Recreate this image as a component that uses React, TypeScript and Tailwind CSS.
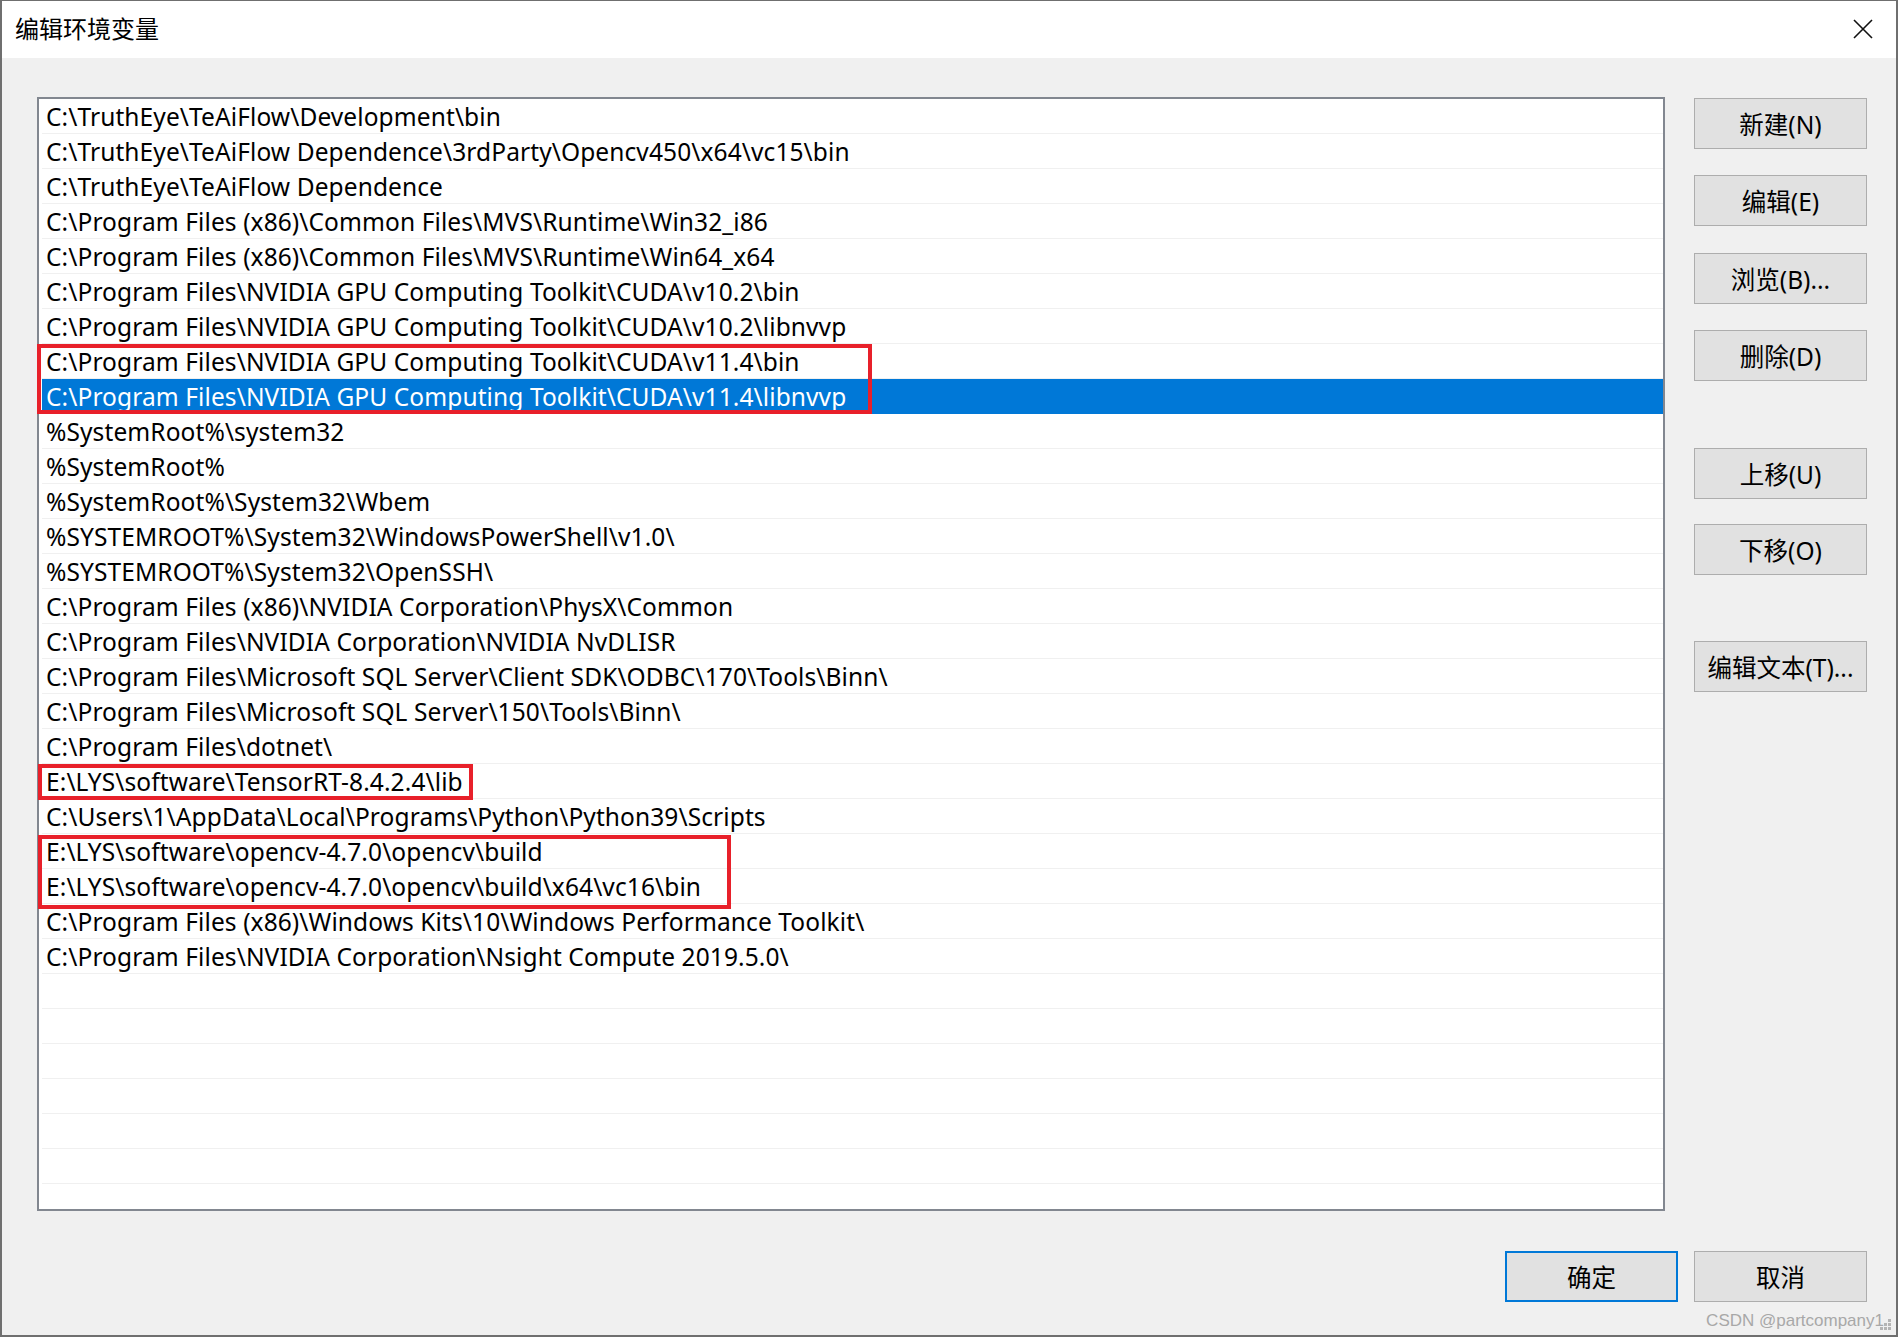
import React from "react";

const FONT = '"Noto Sans", "Noto Sans CJK SC", sans-serif';

const PATHS = [
  "C:\\TruthEye\\TeAiFlow\\Development\\bin",
  "C:\\TruthEye\\TeAiFlow Dependence\\3rdParty\\Opencv450\\x64\\vc15\\bin",
  "C:\\TruthEye\\TeAiFlow Dependence",
  "C:\\Program Files (x86)\\Common Files\\MVS\\Runtime\\Win32_i86",
  "C:\\Program Files (x86)\\Common Files\\MVS\\Runtime\\Win64_x64",
  "C:\\Program Files\\NVIDIA GPU Computing Toolkit\\CUDA\\v10.2\\bin",
  "C:\\Program Files\\NVIDIA GPU Computing Toolkit\\CUDA\\v10.2\\libnvvp",
  "C:\\Program Files\\NVIDIA GPU Computing Toolkit\\CUDA\\v11.4\\bin",
  "C:\\Program Files\\NVIDIA GPU Computing Toolkit\\CUDA\\v11.4\\libnvvp",
  "%SystemRoot%\\system32",
  "%SystemRoot%",
  "%SystemRoot%\\System32\\Wbem",
  "%SYSTEMROOT%\\System32\\WindowsPowerShell\\v1.0\\",
  "%SYSTEMROOT%\\System32\\OpenSSH\\",
  "C:\\Program Files (x86)\\NVIDIA Corporation\\PhysX\\Common",
  "C:\\Program Files\\NVIDIA Corporation\\NVIDIA NvDLISR",
  "C:\\Program Files\\Microsoft SQL Server\\Client SDK\\ODBC\\170\\Tools\\Binn\\",
  "C:\\Program Files\\Microsoft SQL Server\\150\\Tools\\Binn\\",
  "C:\\Program Files\\dotnet\\",
  "E:\\LYS\\software\\TensorRT-8.4.2.4\\lib",
  "C:\\Users\\1\\AppData\\Local\\Programs\\Python\\Python39\\Scripts",
  "E:\\LYS\\software\\opencv-4.7.0\\opencv\\build",
  "E:\\LYS\\software\\opencv-4.7.0\\opencv\\build\\x64\\vc16\\bin",
  "C:\\Program Files (x86)\\Windows Kits\\10\\Windows Performance Toolkit\\",
  "C:\\Program Files\\NVIDIA Corporation\\Nsight Compute 2019.5.0\\",
];

const SELECTED = 8;
const TOTAL_ROWS = 32;

function DialogButton({
  label,
  className = "",
  primary = false,
}: {
  label: string;
  className?: string;
  primary?: boolean;
}) {
  return (
    <button
      type="button"
      className={`flex h-[51px] w-[173px] items-center justify-center bg-[#e1e1e1] pt-[4px] text-[24.5px] leading-none text-black ${
        primary ? "border-2 border-[#0078d7]" : "border border-[#adadad]"
      } ${className}`}
    >
      {label}
    </button>
  );
}

function SizeGrip() {
  const dots = [
    [8, 0],
    [4, 4],
    [8, 4],
    [0, 8],
    [4, 8],
    [8, 8],
  ];
  return (
    <svg width="12" height="12" viewBox="0 0 12 12" className="mb-[4px] ml-[-4px]">
      {dots.map(([x, y]) => (
        <rect key={`${x}-${y}`} x={x} y={y} width="3" height="3" fill="#b4b4b4" />
      ))}
    </svg>
  );
}

export default function App() {
  const rows = Array.from({ length: TOTAL_ROWS }, (_, i) => PATHS[i] ?? "");

  return (
    <div
      className="flex h-[1337px] w-[1898px] flex-col border-x-2 border-t border-b-2 border-[#6f6f6f] bg-[#f0f0f0]"
      style={{ fontFamily: FONT }}
    >
      {/* title bar */}
      <div className="flex h-[57px] shrink-0 items-center justify-between bg-white pl-[13px] pr-[23px]">
        <span className="pb-[2px] text-[24px] text-black">编辑环境变量</span>
        <svg width="20" height="20" viewBox="0 0 20 20" className="mt-[-1px]">
          <path d="M1 1 L19 19 M19 1 L1 19" stroke="#111" strokeWidth="1.6" fill="none" />
        </svg>
      </div>

      {/* body */}
      <div className="flex flex-1 flex-col">
        <div className="flex gap-[29px] pl-[35px] pr-[29px] pt-[39px]">
          <div className="relative h-[1114px] w-[1628px] border-2 border-[#828790] bg-white">
            <div className="h-full overflow-hidden pl-[3px]">
              {rows.map((path, i) => (
                <div
                  key={i}
                  className={`flex h-[35px] items-center whitespace-nowrap border-b pl-[4px] pt-[3px] text-[24.5px] leading-none tracking-[0.1px] ${
                    i === SELECTED
                      ? "border-[#0078d7] bg-[#0078d7] text-white"
                      : "border-[#f0f0f0] text-black"
                  }`}
                >
                  {path}
                </div>
              ))}
            </div>

            {/* red annotation boxes */}
            <div className="pointer-events-none absolute left-[-2px] top-[245px] h-[70px] w-[835px] border-[4px] border-[#e8202a]" />
            <div className="pointer-events-none absolute left-[-1px] top-[665px] h-[36px] w-[435px] border-[4px] border-[#e8202a]" />
            <div className="pointer-events-none absolute left-[-1px] top-[736px] h-[74px] w-[693px] border-[4px] border-[#e8202a]" />
          </div>

          <div className="flex w-[173px] flex-col pt-[1px]">
            <DialogButton label="新建(N)" />
            <DialogButton label="编辑(E)" className="mt-[26px]" />
            <DialogButton label="浏览(B)..." className="mt-[27px]" />
            <DialogButton label="删除(D)" className="mt-[26px]" />
            <DialogButton label="上移(U)" className="mt-[67px]" />
            <DialogButton label="下移(O)" className="mt-[25px]" />
            <DialogButton label="编辑文本(T)..." className="mt-[66px]" />
          </div>
        </div>

        <div className="mt-[40px] flex justify-end gap-[16px] pr-[29px]">
          <DialogButton label="确定" primary />
          <DialogButton label="取消" />
        </div>

        <div className="flex flex-1 items-end justify-end pr-[4px]">
          <span
            className="mb-[6px] text-[17px] leading-none text-[#a8a8a8]"
            style={{ fontFamily: '"Liberation Sans", Arial, sans-serif' }}
          >
            CSDN @partcompany1
          </span>
          <SizeGrip />
        </div>
      </div>
    </div>
  );
}
